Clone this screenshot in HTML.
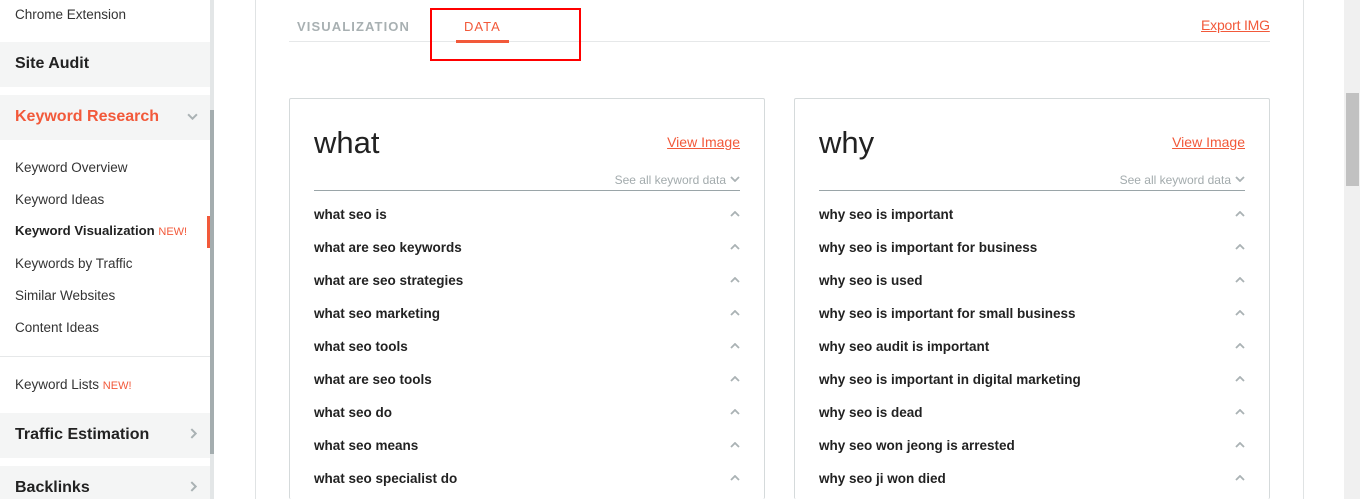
<!DOCTYPE html>
<html style="height:499px;overflow:hidden"><head><style>
*{margin:0;padding:0;box-sizing:border-box}
body{width:1360px;height:499px;overflow:hidden;background:#fff;font-family:"Liberation Sans",sans-serif;position:relative;color:#222}
.a{position:absolute}
.band{position:absolute;left:0;width:210px;height:45px;background:#f4f5f5}
.bt{position:absolute;left:15px;font-weight:bold;font-size:16px;color:#222}
.si{position:absolute;left:15px;font-size:13.5px;color:#333}
.new{color:#f2593a;font-size:11px}
.chev{position:absolute;left:187px}
.card{position:absolute;top:98px;width:476px;height:401px;border:1px solid #d5dadb;border-bottom:none;border-radius:2px;background:#fff}
.card h2{position:absolute;left:24px;top:26px;font-size:31px;font-weight:normal;color:#222;letter-spacing:0}
.vi{position:absolute;right:24px;top:35px;font-size:14px;color:#f2593a;text-decoration:underline}
.sa{position:absolute;right:38px;top:74px;font-size:12px;color:#a3abad}
.sac{position:absolute;right:24px;top:77px}
.hr{position:absolute;left:24px;right:24px;top:91px;height:1px;background:#9aa5a8}
.row{position:absolute;left:24px;right:24px;font-size:13.5px;font-weight:bold;color:#222;height:20px}
.row svg{position:absolute;right:0;top:4px}
</style></head><body>
<svg width="0" height="0" style="position:absolute"><defs>
<symbol id="up" viewBox="0 0 10 6"><path d="M1 5L5 1L9 5" fill="none" stroke="#aab2b4" stroke-width="1.8"/></symbol>
<symbol id="dn" viewBox="0 0 10 6"><path d="M1 1L5 5L9 1" fill="none" stroke="#aab2b4" stroke-width="1.8"/></symbol>
<symbol id="rt" viewBox="0 0 6 10"><path d="M1 1L5 5L1 9" fill="none" stroke="#aab2b4" stroke-width="1.8"/></symbol>
</defs></svg>
<div class="si" style="top:7px">Chrome Extension</div>
<div class="band" style="top:42px"></div><div class="bt" style="top:55px">Site Audit</div>
<div class="band" style="top:95px"></div><div class="bt" style="top:108px;color:#f2593a">Keyword Research</div>
<svg class="chev" style="top:113px" width="11" height="7"><use href="#dn"/></svg>
<div class="si" style="top:160px">Keyword Overview</div>
<div class="si" style="top:192px">Keyword Ideas</div>
<div class="si" style="top:223px;font-weight:bold;color:#222;font-size:13.2px">Keyword Visualization <span class="new" style="font-weight:normal">NEW!</span></div>
<div class="a" style="left:207px;top:216px;width:3px;height:32px;background:#f2593a"></div>
<div class="si" style="top:256px">Keywords by Traffic</div>
<div class="si" style="top:288px">Similar Websites</div>
<div class="si" style="top:320px">Content Ideas</div>
<div class="a" style="left:0;top:356px;width:210px;height:1px;background:#e6e8e9"></div>
<div class="si" style="top:377px">Keyword Lists <span class="new">NEW!</span></div>
<div class="band" style="top:413px"></div><div class="bt" style="top:426px">Traffic Estimation</div><svg class="chev" style="top:428px;left:190px" width="7" height="11"><use href="#rt"/></svg>
<div class="band" style="top:466px"></div><div class="bt" style="top:479px">Backlinks</div><svg class="chev" style="top:481px;left:190px" width="7" height="11"><use href="#rt"/></svg>
<div class="a" style="left:210px;top:0;width:4px;height:499px;background:#e3e6e7"></div>
<div class="a" style="left:210px;top:110px;width:4px;height:344px;background:#a4adaf"></div>
<div class="a" style="left:255px;top:0;width:1px;height:499px;background:#e0e3e4"></div>
<div class="a" style="left:1303px;top:0;width:1px;height:499px;background:#e0e3e4"></div>
<div class="a" style="left:1344px;top:0;width:16px;height:499px;background:#f0f0f0"></div>
<div class="a" style="left:1346px;top:93px;width:13px;height:93px;background:#c1c1c1"></div>
<div class="a" style="left:297px;top:19px;font-size:13px;font-weight:bold;letter-spacing:1.1px;color:#a8b0b2">VISUALIZATION</div>
<div class="a" style="left:464px;top:19px;font-size:13px;letter-spacing:1px;color:#f2593a">DATA</div>
<div class="a" style="left:289px;top:41px;width:981px;height:1px;background:#e6e8e9"></div>
<div class="a" style="left:456px;top:40px;width:53px;height:3px;background:#f2593a"></div>
<div class="a" style="left:430px;top:8px;width:151px;height:53px;border:2px solid #f00"></div>
<div class="a" style="left:1201px;top:17px;font-size:14px;color:#f2593a;text-decoration:underline;letter-spacing:-0.2px">Export IMG</div>
<div class="card" style="left:289px"><h2>what</h2><div class="vi">View Image</div><div class="sa">See all keyword data</div><svg class="sac" width="10" height="6"><use href="#dn"/></svg><div class="hr"></div>
<div class="row" style="top:108px">what seo is<svg width="10" height="6"><use href="#up"/></svg></div>
<div class="row" style="top:141px">what are seo keywords<svg width="10" height="6"><use href="#up"/></svg></div>
<div class="row" style="top:174px">what are seo strategies<svg width="10" height="6"><use href="#up"/></svg></div>
<div class="row" style="top:207px">what seo marketing<svg width="10" height="6"><use href="#up"/></svg></div>
<div class="row" style="top:240px">what seo tools<svg width="10" height="6"><use href="#up"/></svg></div>
<div class="row" style="top:273px">what are seo tools<svg width="10" height="6"><use href="#up"/></svg></div>
<div class="row" style="top:306px">what seo do<svg width="10" height="6"><use href="#up"/></svg></div>
<div class="row" style="top:339px">what seo means<svg width="10" height="6"><use href="#up"/></svg></div>
<div class="row" style="top:372px">what seo specialist do<svg width="10" height="6"><use href="#up"/></svg></div>
</div>
<div class="card" style="left:794px"><h2>why</h2><div class="vi">View Image</div><div class="sa">See all keyword data</div><svg class="sac" width="10" height="6"><use href="#dn"/></svg><div class="hr"></div>
<div class="row" style="top:108px">why seo is important<svg width="10" height="6"><use href="#up"/></svg></div>
<div class="row" style="top:141px">why seo is important for business<svg width="10" height="6"><use href="#up"/></svg></div>
<div class="row" style="top:174px">why seo is used<svg width="10" height="6"><use href="#up"/></svg></div>
<div class="row" style="top:207px">why seo is important for small business<svg width="10" height="6"><use href="#up"/></svg></div>
<div class="row" style="top:240px">why seo audit is important<svg width="10" height="6"><use href="#up"/></svg></div>
<div class="row" style="top:273px">why seo is important in digital marketing<svg width="10" height="6"><use href="#up"/></svg></div>
<div class="row" style="top:306px">why seo is dead<svg width="10" height="6"><use href="#up"/></svg></div>
<div class="row" style="top:339px">why seo won jeong is arrested<svg width="10" height="6"><use href="#up"/></svg></div>
<div class="row" style="top:372px">why seo ji won died<svg width="10" height="6"><use href="#up"/></svg></div>
</div>
</body></html>
